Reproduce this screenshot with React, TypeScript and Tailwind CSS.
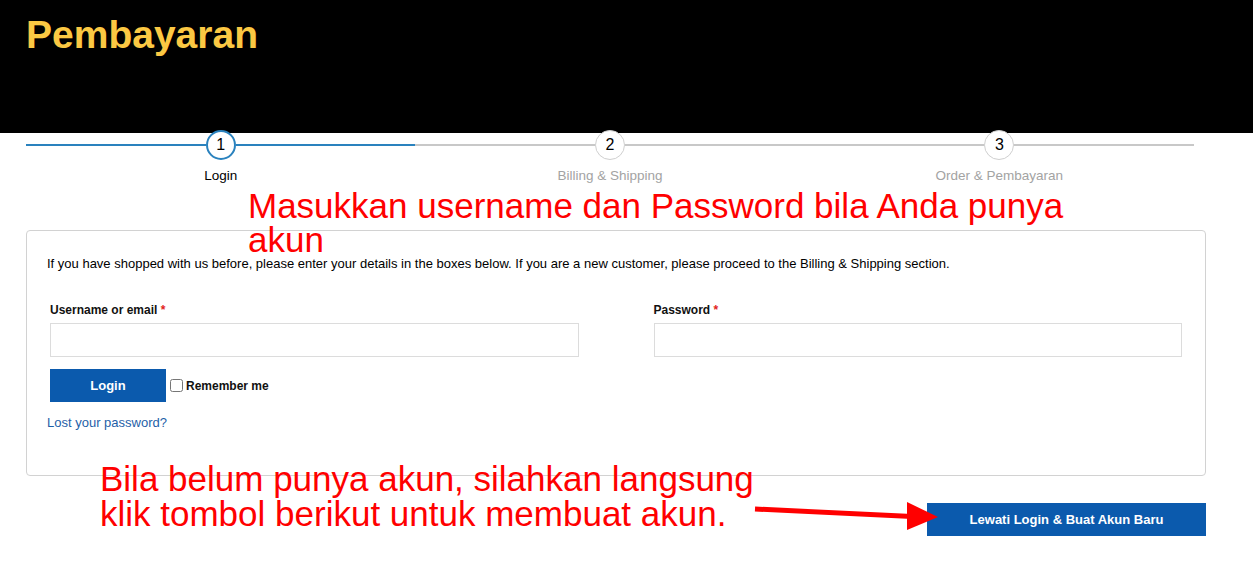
import React from "react";

const font = { fontFamily: '"Liberation Sans", Arial, Helvetica, sans-serif' };

function Step({ n, label, active }: { n: number; label: string; active: boolean }) {
  return (
    <div className="flex flex-col items-center">
      <div className="flex w-full items-center">
        <div className={active ? "h-[2px] flex-1 bg-[#2a82be]" : "h-[2px] flex-1 bg-[#c8c8c8]"} />
        <div
          className={
            active
              ? "flex h-[30px] w-[30px] items-center justify-center rounded-full border-2 border-[#2a82be] bg-white text-[16px] leading-none text-black"
              : "flex h-[30px] w-[30px] items-center justify-center rounded-full border border-[#cfcfcf] bg-white text-[16px] leading-none text-black"
          }
        >
          {n}
        </div>
        <div className={active ? "h-[2px] flex-1 bg-[#2a82be]" : "h-[2px] flex-1 bg-[#c8c8c8]"} />
      </div>
      <div
        className={
          active
            ? "mt-[8px] text-[13.5px] leading-[16px] text-black"
            : "mt-[8px] text-[13.5px] leading-[16px] text-[#a3a3a3]"
        }
      >
        {label}
      </div>
    </div>
  );
}

export default function App() {
  return (
    <div className="relative h-[583px] w-[1253px] overflow-hidden bg-white" style={font}>
      <header className="h-[133px] bg-black pl-[26px] pt-[16px]">
        <h1 className="text-[39px] font-bold leading-[38px] text-[#fbc843]">Pembayaran</h1>
      </header>

      <div className="relative -mt-[3px] ml-[26px] grid w-[1168px] grid-cols-3">
        <Step n={1} label="Login" active />
        <Step n={2} label="Billing & Shipping" active={false} />
        <Step n={3} label="Order & Pembayaran" active={false} />
      </div>

      <section className="ml-[26px] mt-[46px] w-[1180px] rounded-[4px] border border-[#d2d2d2] pb-[44px] pt-[25px]">
        <p className="px-[20px] text-[13px] leading-[16px] text-black">
          If you have shopped with us before, please enter your details in the boxes below. If you are a new customer, please proceed to the Billing &amp; Shipping section.
        </p>
        <div className="mt-[30px] grid grid-cols-2 gap-x-[75px] pl-[23px] pr-[23px]">
          <div>
            <label className="block text-[12px] font-bold leading-[16px] text-[#111]">
              Username or email <span className="text-[#e2231a]">*</span>
            </label>
            <input className="mt-[5px] block h-[34px] w-full border border-[#dcdcdc] bg-white outline-none" />
          </div>
          <div>
            <label className="block text-[12px] font-bold leading-[16px] text-[#111]">
              Password <span className="text-[#e2231a]">*</span>
            </label>
            <input type="password" className="mt-[5px] block h-[34px] w-full border border-[#dcdcdc] bg-white outline-none" />
          </div>
        </div>
        <div className="mt-[12px] flex items-center pl-[23px]">
          <button className="h-[33px] w-[116px] bg-[#0b5aad] text-[13px] font-bold text-white">Login</button>
          <input type="checkbox" className="ml-[4px] h-[13px] w-[13px]" />
          <span className="ml-[3px] text-[12px] font-bold leading-[16px] text-[#111]">Remember me</span>
        </div>
        <a className="mt-[13px] block pl-[20px] text-[13px] leading-[16px] text-[#1f5fa8]" href="#">
          Lost your password?
        </a>
      </section>

      <div className="ml-[26px] mt-[27px] flex w-[1180px] justify-end">
        <button className="h-[33px] w-[279px] bg-[#0b5aad] text-[13px] font-bold text-white">
          Lewati Login &amp; Buat Akun Baru
        </button>
      </div>

      {/* annotations overlaid on the screenshot */}
      <div className="absolute left-[248px] top-[189px] w-[840px] text-[35px] leading-[34px] text-[#ff0000]">
        Masukkan username dan Password bila Anda punya akun
      </div>
      <div className="absolute left-[100px] top-[461px] w-[700px] text-[35px] leading-[35px] text-[#ff0000]">
        Bila belum punya akun, silahkan langsung klik tombol berikut untuk membuat akun.
      </div>
      <svg className="absolute left-0 top-0" width="1253" height="583" viewBox="0 0 1253 583">
        <line x1="755" y1="509" x2="912" y2="516.5" stroke="#ff0000" strokeWidth="5" />
        <polygon points="907,502 938,517 907,530" fill="#ff0000" />
      </svg>
    </div>
  );
}
